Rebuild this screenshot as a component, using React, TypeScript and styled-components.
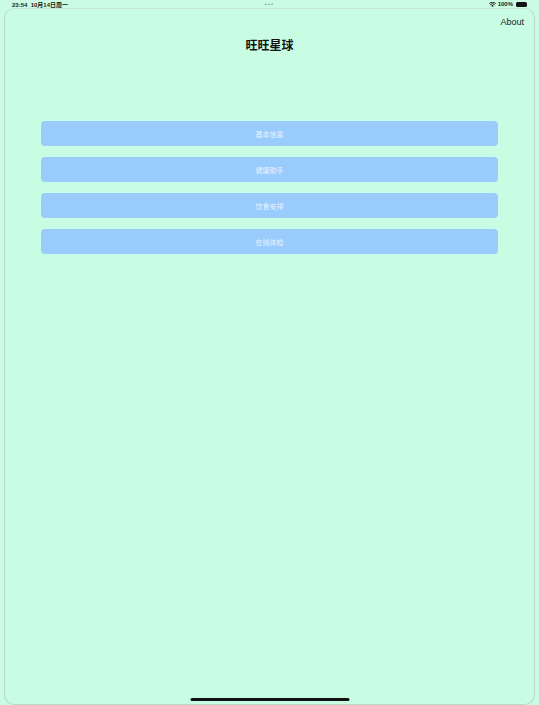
import { FC } from 'react';
import styled, { createGlobalStyle } from 'styled-components';

const GlobalStyle = createGlobalStyle`
  html, body {
    margin: 0;
    padding: 0;
    background: #c9fce2;
    font-family: "Liberation Sans", "Noto Sans CJK SC", sans-serif;
  }
`;

const Screen = styled.div`
  width: 539px;
  height: 705px;
  position: relative;
  background: #c9fce2;
  overflow: hidden;
`;

const StatusBar = styled.div`
  height: 8px;
  padding: 0 12px;
  display: flex;
  align-items: center;
  justify-content: space-between;
  font-size: 6px;
  font-weight: 700;
  color: #1c1c1c;
`;

const StatusRight = styled.div`
  display: flex;
  align-items: center;
  gap: 2px;
`;

const Battery = styled.div`
  width: 11px;
  height: 5px;
  border-radius: 1.5px;
  background: #111;
  margin-left: 1px;
`;

const TopDots = styled.div`
  position: absolute;
  top: 1px;
  left: 50%;
  transform: translateX(-50%);
  font-size: 6px;
  letter-spacing: 1px;
  color: #8a9a92;
`;

const Sheet = styled.div`
  margin: 0 4px;
  height: 697px;
  box-sizing: border-box;
  border: 1px solid #b7d9c6;
  border-top-color: #c4e8d5;
  border-radius: 10px;
  background: #c9fde3;
  display: flex;
  flex-direction: column;
  position: relative;
`;

const NavBar = styled.div`
  display: flex;
  justify-content: flex-end;
  padding: 8px 10px 0 0;
`;

const AboutLink = styled.span`
  font-size: 9px;
  color: #1a1a1a;
`;

const Title = styled.h1`
  margin: 9px 0 0;
  text-align: center;
  font-size: 12px;
  font-weight: 700;
  color: #111;
  font-family: "Noto Sans CJK SC", sans-serif;
`;

const Menu = styled.div`
  margin: 68px 36px 0 36px;
  display: flex;
  flex-direction: column;
  gap: 11px;
`;

const MenuButton = styled.button`
  height: 25px;
  border: none;
  border-radius: 4px;
  background: #99ccfd;
  color: #e8f3ff;
  font-size: 7px;
  font-family: "Noto Sans CJK SC", sans-serif;
  padding: 0;
`;

const HomeIndicator = styled.div`
  position: absolute;
  bottom: 3px;
  left: 50%;
  transform: translateX(-50%);
  width: 159px;
  height: 3px;
  border-radius: 2px;
  background: #111;
`;

const WifiIcon: FC = () => (
  <svg width="7" height="5" viewBox="0 0 14 10">
    <path d="M7 10 L4.6 7.4 A3.4 3.4 0 0 1 9.4 7.4 Z" fill="#111" />
    <path d="M2.6 5.4 A6.3 6.3 0 0 1 11.4 5.4" stroke="#111" strokeWidth="1.8" fill="none" />
    <path d="M0.6 3.2 A9.2 9.2 0 0 1 13.4 3.2" stroke="#111" strokeWidth="1.8" fill="none" />
  </svg>
);

const items = ['基本信息', '健康助手', '饮食安排', '在线体检'];

const App: FC = () => (
  <Screen>
    <GlobalStyle />
    <StatusBar>
      <span>23:54&nbsp;&nbsp;10月14日周一</span>
      <StatusRight>
        <WifiIcon />
        <span>100%</span>
        <Battery />
      </StatusRight>
    </StatusBar>
    <TopDots>•••</TopDots>
    <Sheet>
      <NavBar>
        <AboutLink>About</AboutLink>
      </NavBar>
      <Title>旺旺星球</Title>
      <Menu>
        {items.map(label => (
          <MenuButton key={label}>{label}</MenuButton>
        ))}
      </Menu>
      <HomeIndicator />
    </Sheet>
  </Screen>
);

export default App;
